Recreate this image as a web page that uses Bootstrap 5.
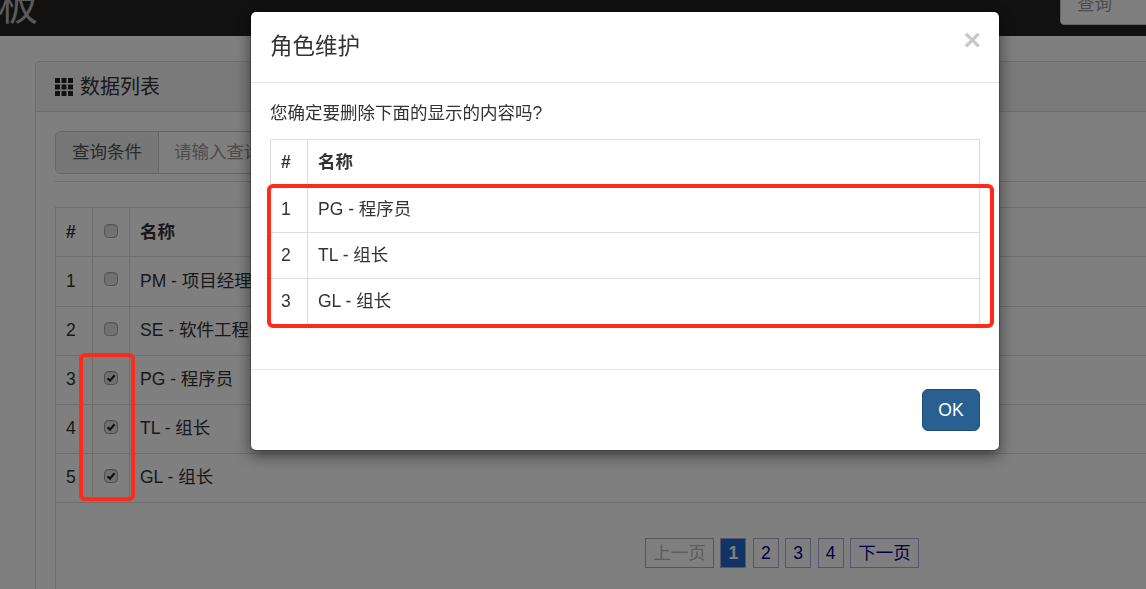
<!DOCTYPE html>
<html lang="zh-CN">
<head>
<meta charset="utf-8">
<title>角色维护</title>
<link rel="stylesheet" href="https://cdn.jsdelivr.net/npm/bootstrap@5.3.0/dist/css/bootstrap.min.css">
<style>
html,body{height:100%;overflow:hidden}
body{font-family:"Liberation Sans","Noto Sans CJK SC",sans-serif;font-size:17.5px;color:#333;background:#fff}
.top-strip{height:36px;background:#222;overflow:hidden;padding:0;align-items:flex-start;flex-wrap:nowrap}
.brand-txt{font-size:40px;line-height:40px;margin-top:-14px;color:#b4b4b4;margin-left:-2px}
.query-btn{width:100px;height:46px;margin-top:-21px;margin-right:-14px;font-size:17.5px;color:#999;background:#fff;border:1px solid #ccc;border-radius:4px;padding:5px 14px 0 16px;text-align:left;flex:none}
.page-wrap{padding:25px 0 0 35px;width:1300px}
.data-panel{border-color:#ddd;border-radius:4px 4px 0 0;min-height:700px;--bs-card-inner-border-radius:3px}
.data-head{height:50px;padding:0 19px;background:#f5f5f5;border-color:#ddd;font-size:20px;gap:7px}
.data-body{padding:19px 19px}
.cond-group{height:43px;width:600px}
.cond-label{font-size:17.5px;background:#eee;border-color:#ccc;padding:0 15px;color:#555;width:104px;justify-content:center}
.cond-input{font-size:17.5px;border-color:#ccc;padding:0 15px}
.cond-input::placeholder{color:#999}
.rule-line{margin:7px 0 25px;border-color:#ddd;opacity:1}
.list-box{border-left:1px solid #ddd;min-height:500px}
.grid-table{margin:0;border-color:#ddd;--bs-table-color:#333;--bs-table-border-color:#ddd;table-layout:fixed;font-size:17.5px}
.grid-table th,.grid-table td{padding:0 10px;line-height:24px;color:#333;vertical-align:middle;font-weight:400}
.grid-table th{font-weight:700}
.list-table{width:100%;margin-left:-1px}
.list-table tr{height:49px}
.list-table tbody tr:first-child{height:50px}
.list-table td{padding-bottom:2px}
.list-table th:nth-child(1){width:37px}
.list-table th:nth-child(2){width:37px;padding:0 1px 0 0;text-align:center}
.list-table td:nth-child(2){padding:0 1px 3px 0;text-align:center}
.tick{width:14px;height:14px;margin:0;background-color:#e2e2e2;border:1px solid #aaa;border-radius:3px;float:none;vertical-align:0;box-shadow:inset 0 1px 1px rgba(0,0,0,.1)}
.tick:checked{background-color:#e2e2e2;border-color:#999;background-size:12px;background-image:url("data:image/svg+xml,%3Csvg xmlns='http://www.w3.org/2000/svg' viewBox='0 0 12 12'%3E%3Cpath d='M2.600 6.200 5 8.600 9.600 3.200' fill='none' stroke='%23222' stroke-width='2.200'/%3E%3C/svg%3E")}
.pager-row{margin:35px 0 0 589px;gap:6.4px;font-size:17.5px;line-height:28px}
.pg-item{display:block;height:30px;border:1px solid #aad;color:#009;text-align:center;min-width:26px;padding:0 4px;text-decoration:none}
.pg-wide{min-width:69px}
.pg-off{border-color:#aaa;color:#bbb}
.pg-now{background:#2468c8;border-color:#aad;color:#fff;font-weight:700}
.role-modal{--bs-modal-width:750px;--bs-modal-border-radius:6px;--bs-modal-inner-border-radius:5px;--bs-modal-border-color:rgba(0,0,0,.2);--bs-modal-header-border-color:#e5e5e5;--bs-modal-footer-border-color:#e5e5e5;overflow:hidden}
.role-modal .modal-dialog{margin:11px 0 0 250px}
.role-modal .modal-content{box-shadow:0 5px 15px rgba(0,0,0,.5)}
.role-modal .modal-header{height:71px;padding:0 19px;position:relative}
.role-modal .modal-title{font-size:22.5px;line-height:28px;font-weight:400;color:#333}
.shut-x{margin-left:auto;margin-top:-14px;margin-right:-1px;background:none;border:0;padding:0;font-size:30px;line-height:1;font-weight:700;color:#c8c8c8}
.role-modal .modal-body{padding:18px 19px 0;height:286px}
.ask-line{margin:0 0 13px;line-height:25px;color:#333}
.pick-table{width:710px}
.pick-table tr{height:46px}
.pick-table thead tr{height:47px}
.pick-table th,.pick-table td{padding-bottom:2px}
.pick-table th:first-child{width:37px}
.role-modal .modal-footer{padding:19px;height:81px;align-items:flex-start}
.ok-btn{margin:0;width:58px;height:42px;padding:0;font-size:17.5px;background:#286090;border-color:#204d74;color:#fff;border-radius:6px}
.mark-a,.mark-b{position:fixed;z-index:1060;border:4px solid #ff2a17;border-radius:6px;pointer-events:none}
.mark-a{left:79px;top:353px;width:56px;height:148px}
.mark-b{left:267px;top:184px;width:727px;height:144px}
</style>
</head>
<body>
<nav class="navbar top-strip d-flex justify-content-between">
  <span class="brand-txt">板</span>
  <button type="button" class="query-btn">查询</button>
</nav>
<div class="page-wrap">
  <div class="card data-panel">
    <div class="card-header data-head d-flex align-items-center">
      <svg width="18" height="18" viewBox="0 0 18 18" fill="#222" aria-hidden="true"><rect x="0" y="0" width="5" height="5"/><rect x="6.500" y="0" width="5" height="5"/><rect x="13" y="0" width="5" height="5"/><rect x="0" y="6.500" width="5" height="5"/><rect x="6.500" y="6.500" width="5" height="5"/><rect x="13" y="6.500" width="5" height="5"/><rect x="0" y="13" width="5" height="5"/><rect x="6.500" y="13" width="5" height="5"/><rect x="13" y="13" width="5" height="5"/></svg>
      <span>数据列表</span>
    </div>
    <div class="card-body data-body">
      <div class="input-group cond-group">
        <span class="input-group-text cond-label">查询条件</span>
        <input type="text" class="form-control cond-input" placeholder="请输入查询条件">
      </div>
      <hr class="rule-line">
      <div class="list-box">
        <table class="table table-bordered grid-table list-table">
          <thead><tr><th>#</th><th><input class="form-check-input tick" type="checkbox"></th><th>名称</th></tr></thead>
          <tbody>
            <tr><td>1</td><td><input class="form-check-input tick" type="checkbox"></td><td>PM - 项目经理</td></tr>
            <tr><td>2</td><td><input class="form-check-input tick" type="checkbox"></td><td>SE - 软件工程师</td></tr>
            <tr><td>3</td><td><input class="form-check-input tick" type="checkbox" checked></td><td>PG - 程序员</td></tr>
            <tr><td>4</td><td><input class="form-check-input tick" type="checkbox" checked></td><td>TL - 组长</td></tr>
            <tr><td>5</td><td><input class="form-check-input tick" type="checkbox" checked></td><td>GL - 组长</td></tr>
          </tbody>
        </table>
        <div class="d-flex pager-row">
          <span class="pg-item pg-wide pg-off">上一页</span>
          <span class="pg-item pg-now">1</span>
          <a class="pg-item" href="#">2</a>
          <a class="pg-item" href="#">3</a>
          <a class="pg-item" href="#">4</a>
          <a class="pg-item pg-wide" href="#">下一页</a>
        </div>
      </div>
    </div>
  </div>
</div>
<div class="modal-backdrop fade show"></div>
<div class="modal d-block role-modal" tabindex="-1">
  <div class="modal-dialog">
    <div class="modal-content">
      <div class="modal-header">
        <h5 class="modal-title">角色维护</h5>
        <button type="button" class="shut-x" aria-label="Close">×</button>
      </div>
      <div class="modal-body">
        <p class="ask-line">您确定要删除下面的显示的内容吗?</p>
        <table class="table table-bordered grid-table pick-table">
          <thead><tr><th>#</th><th>名称</th></tr></thead>
          <tbody>
            <tr><td>1</td><td>PG - 程序员</td></tr>
            <tr><td>2</td><td>TL - 组长</td></tr>
            <tr><td>3</td><td>GL - 组长</td></tr>
          </tbody>
        </table>
      </div>
      <div class="modal-footer">
        <button type="button" class="btn ok-btn">OK</button>
      </div>
    </div>
  </div>
</div>
<div class="mark-a"></div>
<div class="mark-b"></div>
<script src="https://cdn.jsdelivr.net/npm/bootstrap@5.3.0/dist/js/bootstrap.bundle.min.js"></script>
</body>
</html>
